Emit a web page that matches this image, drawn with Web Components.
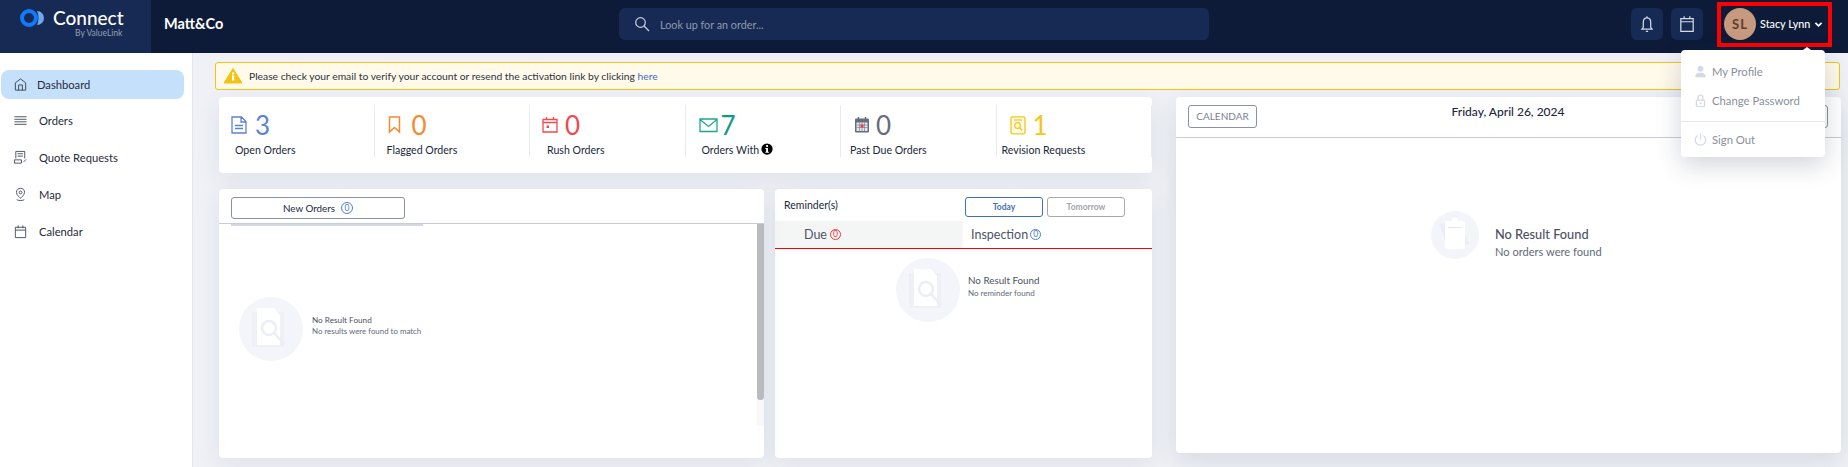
<!DOCTYPE html>
<html lang="en">
<head>
<meta charset="utf-8">
<title>Connect Dashboard</title>
<style>
    html, body { margin: 0; height: 467px; overflow: hidden; }
    body { background: #eff1f6; font-family: Lato, "Liberation Sans", sans-serif; color: #1d2433; }
</style>
</head>
<body>
<app-shell>
    <top-bar slot="top" company="Matt&amp;Co" user="Stacy Lynn" initials="SL"></top-bar>
    <side-nav slot="side">
        <nav-item icon="home" active>Dashboard</nav-item>
        <nav-item icon="menu">Orders</nav-item>
        <nav-item icon="quote">Quote Requests</nav-item>
        <nav-item icon="pin">Map</nav-item>
        <nav-item icon="calendar">Calendar</nav-item>
    </side-nav>
    <alert-bar slot="alert">Please check your email to verify your account or resend the activation link by clicking <a href="#" style="color:#3a6cc8;text-decoration:none">here</a></alert-bar>
    <stat-strip slot="stats">
        <stat-cell icon="doc" count="3" color="#5b84cf" pad="12" gap="8" label-pad="16">Open Orders</stat-cell>
        <stat-cell icon="bookmark" count="0" color="#f58a2e" pad="13" gap="8" label-pad="12">Flagged Orders</stat-cell>
        <stat-cell icon="event" count="0" color="#ee4a52" pad="12" gap="7" label-pad="17">Rush Orders</stat-cell>
        <stat-cell icon="mail" count="7" color="#12998a" pad="13" gap="3" label-pad="16" info>Orders With</stat-cell>
        <stat-cell icon="pastdue" count="0" color="#666d7c" pad="13" gap="6" label-pad="9">Past Due Orders</stat-cell>
        <stat-cell icon="revision" count="1" color="#f5c518" pad="13" gap="7" label-pad="5">Revision Requests</stat-cell>
    </stat-strip>
    <new-orders slot="orders"></new-orders>
    <reminder-panel slot="reminders"></reminder-panel>
    <calendar-panel slot="calendar"></calendar-panel>
</app-shell>

<script>
const ICONS = {
    home: '<path d="M2.500 14V6.200L8 2l5.500 4.200V14zM6 14V8.500h4V14" fill="none" stroke="#3c4354"/>',
    menu: '<path d="M1.500 4h13M1.500 6.700h13M1.500 9.400h13M1.500 12.100h13" fill="none" stroke="#4a5060"/>',
    quote: '<path d="M3 9V1.500h9.500V9M4.800 4h5.800M4.800 6.500h5.800M1.500 10.500h7.500v3.500H1.500zM11 13l3-3" fill="none" stroke="#4a5060"/>',
    pin: '<path d="M8 1.500a4.300 4.300 0 0 1 4.300 4.300c0 2.700-4.300 6.200-4.300 6.200S3.700 8.500 3.700 5.800A4.300 4.300 0 0 1 8 1.500z" fill="none" stroke="#4a5060"/><circle cx="8" cy="5.800" r="1.500" fill="none" stroke="#4a5060"/><path d="M4 13.500c1 1.200 7 1.200 8 0" fill="none" stroke="#4a5060"/>',
    calendar: '<path d="M2.500 3.500h11v11h-11zM2.500 6.500h11M5.500 1.500v3M10.500 1.500v3" fill="none" stroke="#4a5060"/>',
    search: '<circle cx="6.500" cy="6.500" r="4.800" fill="none" stroke="#c9d0dd" stroke-width="1.200"/><path d="M10 10l5 5" stroke="#c9d0dd" stroke-width="1.200"/>',
    bell: '<path d="M8 2.500c-2.500 0-3.300 2-3.300 4v4.500L3.500 12.500h9L11.300 11V6.500c0-2-.8-4-3.300-4zM8 1v1.500M7 14.500h2" fill="none" stroke="#d5dae5" stroke-width="1.100"/>',
    calendarLight: '<path d="M2.500 3.200h11v11.300h-11zM2.500 6h11M5.500 1.200v2M10.500 1.200v2" fill="none" stroke="#d5dae5" stroke-width="1.100"/>',
    chevron: '<path d="M2.500 5l5.500 5.500L13.500 5" fill="none" stroke="#fff" stroke-width="3"/>',
    warning: '<path d="M9 .5L18 15H0z" fill="#f2c313" stroke="#f2c313" stroke-linejoin="round"/><rect x="8" y="4.500" width="2.200" height="2" fill="#fff"/><rect x="8" y="7.500" width="2.200" height="5" fill="#fff"/>',
    doc: '<path d="M1 1h9.500L15 5.500V17H1zM10 1v5h5M4 9.500h8M4 12.500h8" fill="none" stroke="#5b84cf" stroke-width="1.300"/>',
    bookmark: '<path d="M1.500 1h10v15l-5-4.500-5 4.500z" fill="none" stroke="#f58a2e" stroke-width="1.500"/>',
    event: '<path d="M1 3.500h14V16H1zM1 6.500h14M4.500 1v3M11.500 1v3" fill="none" stroke="#ee4a52" stroke-width="1.300"/><rect x="4.500" y="9.500" width="2.500" height="2.500" fill="#ee4a52"/>',
    mail: '<path d="M1 2h17v12.500H1zM1 2.500l8.500 7 8.500-7" fill="none" stroke="#1fa594" stroke-width="1.300"/>',
    pastdue: '<rect x="1" y="2.500" width="14" height="14" rx="1" fill="#666d7c"/><rect x="2.500" y="6.500" width="11" height="8.500" fill="#e4e6ea"/><path d="M4.500 1v3M11.500 1v3" stroke="#666d7c" stroke-width="1.500"/><path d="M2.500 9h11M2.500 11.500h11M5.500 6.500V15M8 6.500V15M10.500 6.500V15" stroke="#7b8190" stroke-width=".7"/><rect x="6.500" y="8.500" width="3" height="3" fill="#ee3a43"/>',
    revision: '<rect x="1" y=".8" width="14" height="17" rx="1.500" fill="#fffbe6" stroke="#f5c518" stroke-width="1.300"/><path d="M4 4h8" stroke="#f5c518" stroke-width="1.200"/><circle cx="7.500" cy="9.500" r="2.800" fill="none" stroke="#f5c518" stroke-width="1.200"/><path d="M9.500 11.500l2.500 3" stroke="#f5c518" stroke-width="1.300"/>',
    info: '<circle cx="8" cy="8" r="7.500" fill="#000"/><rect x="6.800" y="2.800" width="2.600" height="2.400" fill="#fff"/><path d="M5.800 6.500h3.500v5h1.200v1.500H5.800v-1.500h1v-3.500h-1z" fill="#fff"/>',
    person: '<circle cx="8" cy="4.500" r="3.600" fill="#d4d9e6"/><path d="M1.500 15c0-4 2.500-5.500 6.500-5.500s6.500 1.500 6.500 5.500z" fill="#d4d9e6"/>',
    lock: '<path d="M5 8V4.300a3 3 0 0 1 6 0V8" fill="none" stroke="#d4d9e6" stroke-width="1.500"/><rect x="3" y="7.500" width="10" height="8" rx="1" fill="none" stroke="#d4d9e6" stroke-width="1.600"/><circle cx="8" cy="11.500" r="1.300" fill="#d4d9e6"/>',
    power: '<path d="M8 .8v7.500" stroke="#d4d9e6" stroke-width="1.500"/><path d="M4.500 3a6.500 6.500 0 1 0 7 0" fill="none" stroke="#d4d9e6" stroke-width="1.500"/>'
};

class AppIcon extends HTMLElement {
    constructor() {
        super();
        this.attachShadow({ mode: 'open' });
    }
    connectedCallback() {
        const size = this.getAttribute('size') || 16;
        const box = this.getAttribute('box') || '0 0 16 16';
        this.shadowRoot.innerHTML = `
            <style>
                :host { display: inline-flex; flex: none; }
                svg { display: block; }
            </style>
            <svg width="${size}" height="${this.getAttribute('height') || size}" viewBox="${box}">${ICONS[this.getAttribute('name')] || ''}</svg>
        `;
    }
}
customElements.define('app-icon', AppIcon);

class AppShell extends HTMLElement {
    constructor() {
        super();
        this.attachShadow({ mode: 'open' });
        this.shadowRoot.innerHTML = `
            <style>
                :host { display: block; height: 467px; }
                .body { display: flex; height: 414px; }
                main { flex: 1; padding: 9px 8px 0 22px; min-width: 0; }
                .content { display: grid; grid-template-columns: 933px 665px; column-gap: 24px; margin: 7px 0 0 4px; }
                .left { display: flex; flex-direction: column; gap: 16px; }
                .panels { display: grid; grid-template-columns: 545px 377px; column-gap: 11px; height: 269px; }
            </style>
            <slot name="top"></slot>
            <div class="body">
                <slot name="side"></slot>
                <main>
                    <slot name="alert"></slot>
                    <div class="content">
                        <div class="left">
                            <slot name="stats"></slot>
                            <div class="panels">
                                <slot name="orders"></slot>
                                <slot name="reminders"></slot>
                            </div>
                        </div>
                        <slot name="calendar"></slot>
                    </div>
                </main>
            </div>
        `;
    }
}
customElements.define('app-shell', AppShell);

class TopBar extends HTMLElement {
    constructor() {
        super();
        this.attachShadow({ mode: 'open' });
    }
    connectedCallback() {
        const company = this.getAttribute('company');
        const user = this.getAttribute('user');
        const initials = this.getAttribute('initials');
        this.shadowRoot.innerHTML = `
            <style>
                :host { display: flex; height: 53px; background: #0d1b38; color: #fff; position: relative; z-index: 5; }
                .brand { width: 151px; flex: none; background: #172a54; position: relative; }
                .logo { position: absolute; left: 20px; top: 9px; }
                .word { position: absolute; left: 53px; top: 5px; font-size: 19px; font-weight: 500; line-height: 26px; }
                .by { position: absolute; left: 75px; top: 27px; font-size: 8.500px; line-height: 12px; color: #95a0b6; white-space: nowrap; }
                .company { width: 468px; box-sizing: border-box; padding-left: 13px; font-weight: 700; font-size: 14.500px; line-height: 48px; }
                .search { width: 590px; height: 32px; margin-top: 8px; border-radius: 6px; background: #172a54; display: flex; align-items: center; gap: 10px; padding-left: 15px; box-sizing: border-box; font-size: 10.800px; color: #8f9ab0; }
                .right { flex: 1; display: flex; justify-content: flex-end; padding-right: 16px; }
                .btn { width: 32px; height: 32px; margin: 8px 0 0 8px; border-radius: 6px; background: #172a54; display: flex; align-items: center; justify-content: center; }
                .user { position: relative; width: 115px; height: 45px; margin: 2px 0 0 14px; border: 4px solid #f00; box-sizing: border-box; display: flex; align-items: flex-start; padding: 2px 0 0 3px; }
                .avatar { width: 32px; height: 32px; border-radius: 50%; background: #c79a80; color: #5a3f2e; font-weight: 700; font-size: 13px; letter-spacing: 1px; line-height: 32px; text-align: center; flex: none; }
                .name { margin-left: 4px; font-size: 10.800px; font-weight: 500; line-height: 32px; white-space: nowrap; }
                .chev { margin: 12px 0 0 4px; }
            </style>
            <div class="brand">
                <svg class="logo" width="26" height="18" viewBox="0 0 26 18">
                    <circle cx="9" cy="9" r="7" fill="none" stroke="#0f7bff" stroke-width="4"/>
                    <path d="M17 2a7 7 0 0 1 0 14c2-4 2-10 0-14z" fill="#6ea9ee"/>
                </svg>
                <span class="word">Connect</span>
                <span class="by">By ValueLink</span>
            </div>
            <div class="company">${company}</div>
            <div class="search"><app-icon name="search"></app-icon><span>Look up for an order...</span></div>
            <div class="right">
                <div class="btn"><app-icon name="bell" size="18"></app-icon></div>
                <div class="btn"><app-icon name="calendarLight" size="18"></app-icon></div>
                <div class="user">
                    <div class="avatar">${initials}</div>
                    <span class="name">${user}</span>
                    <app-icon class="chev" name="chevron" size="9"></app-icon>
                    <user-menu></user-menu>
                </div>
            </div>
        `;
    }
}
customElements.define('top-bar', TopBar);

class UserMenu extends HTMLElement {
    constructor() {
        super();
        this.attachShadow({ mode: 'open' });
        this.shadowRoot.innerHTML = `
            <style>
                :host { display: block; position: absolute; left: -40px; top: 44px; width: 144px; height: 107px; background: #fff; border-radius: 4px; box-shadow: 0 8px 26px rgba(30, 40, 70, .2); color: #8a8f9a; font-size: 11.300px; }
                :host::before { content: ""; position: absolute; left: 122px; top: -3px; border: 4px solid transparent; border-top: 0; border-bottom: 3px solid #fff; }
                .row { display: flex; align-items: center; gap: 5px; padding-left: 13px; height: 29px; }
                .first { margin-top: 6px; height: 30px; }
                .sep { height: 1px; background: #e6e8ee; margin-top: 6px; }
                .out { height: 35px; }
            </style>
            <div class="row first"><app-icon name="person" size="13"></app-icon>My Profile</div>
            <div class="row"><app-icon name="lock" size="13"></app-icon>Change Password</div>
            <div class="sep"></div>
            <div class="row out"><app-icon name="power" size="13"></app-icon>Sign Out</div>
        `;
    }
}
customElements.define('user-menu', UserMenu);

class SideNav extends HTMLElement {
    constructor() {
        super();
        this.attachShadow({ mode: 'open' });
        this.shadowRoot.innerHTML = `
            <style>
                :host { display: flex; flex-direction: column; gap: 8px; flex: none; width: 192px; padding-top: 17px; background: #fff; border-right: 1px solid #e3e5ea; }
            </style>
            <slot></slot>
        `;
    }
}
customElements.define('side-nav', SideNav);

class NavItem extends HTMLElement {
    constructor() {
        super();
        this.attachShadow({ mode: 'open' });
    }
    connectedCallback() {
        this.shadowRoot.innerHTML = `
            <style>
                :host { display: flex; align-items: center; gap: 11px; height: 29px; width: 183px; margin-left: 1px; padding: 0 0 2px 12px; box-sizing: border-box; border-radius: 8px; font-size: 11.200px; color: #262b3a; }
                :host([active]) { background: #c5e0fb; gap: 9px; padding-bottom: 0; }
            </style>
            <app-icon name="${this.getAttribute('icon')}" size="15"></app-icon>
            <slot></slot>
        `;
    }
}
customElements.define('nav-item', NavItem);

class AlertBar extends HTMLElement {
    constructor() {
        super();
        this.attachShadow({ mode: 'open' });
        this.shadowRoot.innerHTML = `
            <style>
                :host { display: flex; align-items: center; gap: 7px; height: 28px; box-sizing: border-box; padding-left: 8px; background: #fffaea; border: 1px solid #f2c511; border-radius: 3px; font-size: 10.300px; color: #2c3342; }
            </style>
            <app-icon name="warning" size="18" height="16" box="0 0 18 16"></app-icon>
            <span><slot></slot></span>
        `;
    }
}
customElements.define('alert-bar', AlertBar);

class StatStrip extends HTMLElement {
    constructor() {
        super();
        this.attachShadow({ mode: 'open' });
        this.shadowRoot.innerHTML = `
            <style>
                :host { display: grid; grid-template-columns: repeat(6, 1fr); height: 76px; box-sizing: border-box; padding-top: 8px; background: #fff; border-radius: 4px; box-shadow: 0 6px 24px rgba(40, 50, 90, .08); }
            </style>
            <slot></slot>
        `;
    }
}
customElements.define('stat-strip', StatStrip);

class StatCell extends HTMLElement {
    constructor() {
        super();
        this.attachShadow({ mode: 'open' });
    }
    connectedCallback() {
        const attr = name => this.getAttribute(name);
        const icon = attr('icon');
        const info = this.hasAttribute('info') ? '<app-icon class="info" name="info" size="12"></app-icon>' : '';
        this.shadowRoot.innerHTML = `
            <style>
                :host { display: block; height: 52px; box-sizing: border-box; border-right: 1px solid #e9ebf0; }
                .top { display: flex; align-items: center; gap: ${attr('gap')}px; height: 30px; margin-top: 5px; padding-left: ${attr('pad')}px; }
                .count { font-size: 26px; line-height: 30px; color: ${attr('color')}; }
                .label { display: flex; align-items: flex-start; gap: 2px; margin-top: 2px; padding-left: ${attr('label-pad')}px; font-size: 10.600px; line-height: 16px; color: #20283a; }
                .info { margin-top: 1px; }
            </style>
            <div class="top">
                <app-icon name="${icon}" size="${icon === 'mail' ? 19 : 16}" height="${icon === 'revision' ? 19 : 18}" box="${icon === 'mail' ? '0 0 19 16' : icon === 'revision' ? '0 0 16 19' : '0 0 16 18'}"></app-icon>
                <span class="count">${attr('count')}</span>
            </div>
            <div class="label"><slot></slot>${info}</div>
        `;
    }
}
customElements.define('stat-cell', StatCell);

class CountBadge extends HTMLElement {
    constructor() {
        super();
        this.attachShadow({ mode: 'open' });
        this.shadowRoot.innerHTML = `
            <style>
                :host { display: inline-flex; align-items: center; justify-content: center; width: 11px; height: 11px; box-sizing: border-box; border: 1px solid currentColor; border-radius: 50%; font-size: 8.500px; line-height: 9px; font-weight: 400; flex: none; }
            </style>
            <slot></slot>
        `;
    }
}
customElements.define('count-badge', CountBadge);

class EmptyState extends HTMLElement {
    constructor() {
        super();
        this.attachShadow({ mode: 'open' });
    }
    connectedCallback() {
        const clip = this.getAttribute('art') === 'clip';
        const art = clip ? `
            <path d="M8 13l21-3 9 23-21 4z" fill="#eceef5"/>
            <rect x="14" y="10" width="20" height="28" rx="2" fill="#fff"/>
            <rect x="21" y="7" width="6" height="4" rx="1" fill="#fff"/>
            <path d="M17 16.500h14" stroke="#e4e8f2"/>
        ` : `
            <rect x="13" y="15" width="32" height="35" fill="#eef0f6"/>
            <path d="M18 11h17l6 7v30H18z" fill="#fff"/>
            <circle cx="30" cy="31" r="7" fill="#fff" stroke="#eceef5" stroke-width="2.500"/>
            <path d="M35 36l10 11" stroke="#eceef5" stroke-width="2.500"/>
        `;
        const size = clip ? 48 : 64;
        this.shadowRoot.innerHTML = `
            <style>
                :host { display: flex; align-items: center; gap: var(--gap, 9px); color: #555c6c; }
                svg { display: block; flex: none; }
                .t { font-size: var(--title, 10.500px); line-height: var(--title-lh, 12px); font-weight: var(--title-w, 400); color: #4c5261; white-space: nowrap; }
                .s { font-size: var(--sub, 9.500px); line-height: var(--sub-lh, 12px); color: #636a7a; white-space: nowrap; }
                .txt { margin-top: var(--txt-top, 0); }
            </style>
            <svg width="${size}" height="${size}" viewBox="0 0 ${size} ${size}">
                <circle cx="${size / 2}" cy="${size / 2}" r="${size / 2}" fill="#f4f5fa"/>
                ${art}
            </svg>
            <div class="txt">
                <div class="t"><slot name="title"></slot></div>
                <div class="s"><slot name="sub"></slot></div>
            </div>
        `;
    }
}
customElements.define('empty-state', EmptyState);

class NewOrders extends HTMLElement {
    constructor() {
        super();
        this.attachShadow({ mode: 'open' });
        this.shadowRoot.innerHTML = `
            <style>
                :host { display: block; position: relative; height: 269px; background: #fff; border-radius: 4px; box-shadow: 0 6px 24px rgba(40, 50, 90, .08); }
                .head { height: 35px; box-sizing: border-box; padding: 8px 0 0 12px; border-bottom: 1px solid #c8ccd6; }
                .tab { width: 174px; height: 22px; box-sizing: border-box; border: 1px solid #8b91a1; border-radius: 3px; display: flex; align-items: center; justify-content: center; gap: 6px; font-size: 9.800px; color: #20283a; }
                .tab count-badge { color: #4f7cc9; width: 12px; height: 12px; }
                .mark { width: 192px; height: 2px; margin-left: 12px; background: #d2d7e4; }
                .body { display: flex; height: 232px; }
                .list { flex: 1; padding: 71px 0 0 20px; --title: 8.200px; --sub: 7.900px; --title-lh: 11px; --sub-lh: 11px; --txt-top: -7px; }
                .track { width: 7px; height: 202px; background: #f8f8fa; margin-top: -2px; }
                .thumb { width: 7px; height: 176px; background: #b9bbc0; border-radius: 0 0 3px 3px; }
            </style>
            <div class="head"><div class="tab">New Orders <count-badge>0</count-badge></div></div>
            <div class="mark"></div>
            <div class="body">
                <div class="list">
                    <empty-state>
                        <span slot="title">No Result Found</span>
                        <span slot="sub">No results were found to match</span>
                    </empty-state>
                </div>
                <div class="track"><div class="thumb"></div></div>
            </div>
        `;
    }
}
customElements.define('new-orders', NewOrders);

class ReminderPanel extends HTMLElement {
    constructor() {
        super();
        this.attachShadow({ mode: 'open' });
        this.shadowRoot.innerHTML = `
            <style>
                :host { display: block; height: 269px; background: #fff; border-radius: 4px; box-shadow: 0 6px 24px rgba(40, 50, 90, .08); }
                .head { height: 32px; box-sizing: border-box; padding: 8px 0 0 9px; display: flex; font-size: 10.500px; line-height: 16px; color: #20283a; }
                .title { width: 181px; }
                .pill { width: 78px; height: 20px; box-sizing: border-box; margin-right: 4px; border: 1px solid #a8a8ac; border-radius: 3px; text-align: center; font-size: 8.500px; font-weight: 700; line-height: 18px; color: #a3a5ab; }
                .pill.on { border-color: #3f6fc0; color: #4a72b8; }
                .tabs { display: grid; grid-template-columns: 188px 1fr; height: 28px; border-bottom: 1px solid #f00; box-sizing: border-box; font-size: 12.500px; color: #4c5566; }
                .tab { display: flex; align-items: center; }
                .due { background: #f4f6f6; padding-left: 29px; gap: 3px; }
                .due count-badge { color: #ee3a43; }
                .insp { padding-left: 8px; gap: 2px; }
                .insp count-badge { color: #4f7cc9; }
                .empty { padding: 9px 0 0 121px; --gap: 8px; --title: 9.800px; --title-lh: 13px; --sub: 8px; --txt-top: -8px; }
            </style>
            <div class="head">
                <div class="title">Reminder(s)</div>
                <div class="pill on">Today</div>
                <div class="pill">Tomorrow</div>
            </div>
            <div class="tabs">
                <div class="tab due">Due <count-badge>0</count-badge></div>
                <div class="tab insp">Inspection <count-badge>0</count-badge></div>
            </div>
            <div class="empty">
                <empty-state>
                    <span slot="title">No Result Found</span>
                    <span slot="sub">No reminder found</span>
                </empty-state>
            </div>
        `;
    }
}
customElements.define('reminder-panel', ReminderPanel);

class CalendarPanel extends HTMLElement {
    constructor() {
        super();
        this.attachShadow({ mode: 'open' });
        this.shadowRoot.innerHTML = `
            <style>
                :host { display: block; height: 356px; background: #fff; border-radius: 4px; box-shadow: 0 8px 24px rgba(40, 50, 90, .12); }
                .head { height: 41px; box-sizing: border-box; padding: 8px 13px 0 12px; display: flex; justify-content: space-between; border-bottom: 1px solid #c8ccd6; }
                .btn { width: 69px; height: 23px; box-sizing: border-box; border: 1px solid #8b91a1; border-radius: 3px; font-size: 10px; line-height: 21px; text-align: center; color: #7c8290; }
                .date { font-size: 12px; font-weight: 500; line-height: 14px; color: #1d2740; }
                .empty { padding: 72px 0 0 255px; --gap: 16px; --title: 12.800px; --title-lh: 17px; --title-w: 500; --sub: 11.100px; --sub-lh: 17px; --txt-top: 16px; }
            </style>
            <div class="head">
                <div class="btn">CALENDAR</div>
                <div class="date">Friday, April 26, 2024</div>
                <div class="btn"></div>
            </div>
            <div class="empty">
                <empty-state art="clip">
                    <span slot="title">No Result Found</span>
                    <span slot="sub">No orders were found</span>
                </empty-state>
            </div>
        `;
    }
}
customElements.define('calendar-panel', CalendarPanel);
</script>
</body>
</html>
